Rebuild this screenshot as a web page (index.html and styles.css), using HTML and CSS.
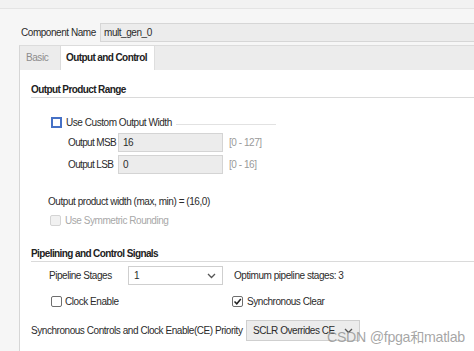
FILE: index.html
```html
<!DOCTYPE html>
<html>
<head>
<meta charset="utf-8">
<link rel="stylesheet" href="styles.css">
</head>
<body>
<div class="topstrip"></div>
<div class="header">
  <span class="name-label">Component Name</span>
  <div class="name-field">mult_gen_0</div>
</div>
<div class="tabs-wrap">
  <div class="tabbar">
    <div class="tab">Basic</div>
    <div class="tab active">Output and Control</div>
  </div>
  <div class="panel">
    <div class="section-title first">Output Product Range</div>
    <div class="row cb-row custom">
      <span class="cb blue"></span><span class="cb-label">Use Custom Output Width</span>
      <span class="group-line"></span>
    </div>
    <div class="row field-row msb">
      <span class="f-label">Output MSB</span>
      <div class="f-input">16</div>
      <span class="hint">[0 - 127]</span>
    </div>
    <div class="row field-row lsb">
      <span class="f-label">Output LSB</span>
      <div class="f-input">0</div>
      <span class="hint">[0 - 16]</span>
    </div>
    <div class="row plain width-info">Output product width (max, min) = (16,0)</div>
    <div class="row cb-row sym">
      <span class="cb disabled"></span><span class="cb-label dis">Use Symmetric Rounding</span>
    </div>
    <div class="section-title second">Pipelining and Control Signals</div>
    <div class="row pipe-row">
      <span class="p-label">Pipeline Stages</span>
      <div class="select white">
        <span>1</span>
        <svg class="chev" width="9" height="6" viewBox="0 0 9 6"><polyline points="1,1 4.5,4.5 8,1" fill="none" stroke="#555" stroke-width="1.3"/></svg>
      </div>
      <span class="optimum">Optimum pipeline stages: 3</span>
    </div>
    <div class="row ce-row">
      <div class="ce-left"><span class="cb gray"></span><span class="cb-label tight">Clock Enable</span></div>
      <div class="ce-right"><span class="cb gray checked"><svg width="9" height="9" viewBox="0 0 9 9"><polyline points="1.5,4.5 3.8,6.8 7.8,2" fill="none" stroke="#222" stroke-width="1.5"/></svg></span><span class="cb-label tight">Synchronous Clear</span></div>
    </div>
    <div class="row prio-row">
      <span class="prio-label">Synchronous Controls and Clock Enable(CE) Priority</span>
      <div class="select gray-sel">
        <span>SCLR Overrides CE</span>
        <svg class="chev" width="9" height="6" viewBox="0 0 9 6"><polyline points="1,1 4.5,4.5 8,1" fill="none" stroke="#555" stroke-width="1.3"/></svg>
      </div>
    </div>
    <div class="watermark">CSDN @fpga和matlab</div>
  </div>
</div>
</body>
</html>
```
FILE: styles.css
```css
html, body {
  margin: 0;
  padding: 0;
}
body {
  width: 474px;
  height: 351px;
  overflow: hidden;
  background: #f6f6f6;
  font-family: "Liberation Sans", Arial, sans-serif;
  font-size: 10px;
  letter-spacing: -0.45px;
  color: #2b2b2b;
  position: relative;
  white-space: nowrap;
}
.topstrip {
  height: 8px;
  background: #f2f2f2;
  border-bottom: 1px solid #e4e4e4;
}
.header {
  display: flex;
  align-items: center;
  padding-left: 21px;
  margin-top: 14px;
  height: 19px;
}
.name-label {
  width: 79px;
  flex: none;
}
.name-field {
  flex: 1;
  height: 19px;
  box-sizing: border-box;
  background: #ececec;
  border: 1px solid #d6d6d6;
  border-right: none;
  padding-left: 3px;
  line-height: 17px;
}
.tabs-wrap {
  margin-top: 3px;
  margin-left: 19px;
}
.tabbar {
  display: flex;
  height: 24px;
  background: #ececec;
  border-top: 1px solid #dcdcdc;
  border-left: 1px solid #d6d6d6;
}
.tab {
  height: 24px;
  line-height: 24px;
  box-sizing: border-box;
}
.tab:first-child {
  width: 41px;
  padding-left: 6px;
  color: #8c8c8c;
  border-right: 1px solid #dcdcdc;
}
.tab.active {
  width: 94px;
  background: #fff;
  padding-left: 5px;
  font-weight: bold;
  letter-spacing: -0.6px;
  color: #222;
  border-right: 1px solid #dedede;
}
.panel {
  position: relative;
  background: #fff;
  border-left: 1px solid #d6d6d6;
  height: 281px;
  overflow: hidden;
  padding-left: 11px;
}
.section-title {
  font-weight: bold;
  letter-spacing: -0.6px;
  line-height: 14px;
  height: 14px;
  border-bottom: 1px solid #dadada;
  color: #222;
}
.section-title.first {
  padding-top: 13px;
}
.section-title.second {
  margin-top: 20px;
}
.row {
  display: flex;
  align-items: center;
}
.row > * {
  flex: none;
}
.cb-row {
  height: 14px;
}
.custom {
  margin-top: 17px;
  padding-left: 20px;
}
.cb {
  display: inline-block;
  width: 11px;
  height: 11px;
  box-sizing: border-box;
  flex: none;
}
.cb.blue {
  border: 2px solid #4671c6;
  background: #fff;
}
.cb.disabled {
  border: 1px solid #d4d4d4;
  background: #f1f1f1;
  border-radius: 2px;
}
.cb.gray {
  border: 1px solid #6e6e6e;
  border-radius: 2px;
  background: #fff;
  display: flex;
  align-items: center;
  justify-content: center;
}
.cb-label {
  margin-left: 4px;
}
.cb-label.tight {
  margin-left: 3px;
}
.cb-label.dis {
  color: #a8a8a8;
}
.group-line {
  width: 100px;
  height: 1px;
  background: #e2e2e2;
  margin-left: 4px;
  margin-top: 4px;
}
.field-row {
  height: 19px;
  padding-left: 37px;
}
.msb {
  margin-top: 4px;
}
.lsb {
  margin-top: 3px;
}
.f-label {
  width: 50px;
  letter-spacing: -0.65px;
}
.f-input {
  width: 105px;
  height: 19px;
  box-sizing: border-box;
  background: #ececec;
  border: 1px solid #d4d4d4;
  padding-left: 4px;
  line-height: 17px;
}
.hint {
  margin-left: 6px;
  color: #9a9a9a;
}
.plain {
  height: 14px;
}
.width-info {
  margin-top: 20px;
  padding-left: 17px;
}
.sym {
  margin-top: 5px;
  padding-left: 19px;
}
.pipe-row {
  margin-top: 4px;
  height: 19px;
  padding-left: 18px;
}
.p-label {
  width: 79px;
}
.select {
  box-sizing: border-box;
  border: 1px solid #cfcfcf;
  display: flex;
  align-items: center;
  justify-content: space-between;
  padding: 0 6px 0 5px;
}
.select.white {
  width: 95px;
  height: 19px;
  background: #fff;
}
.optimum {
  margin-left: 11px;
}
.ce-row {
  margin-top: 9px;
  height: 14px;
  padding-left: 20px;
}
.ce-left {
  display: flex;
  align-items: center;
  width: 181px;
}
.ce-right {
  display: flex;
  align-items: center;
}
.ce-right .cb-label {
  margin-left: 4px;
}
.prio-row {
  margin-top: 12px;
  height: 21px;
}
.prio-label {
  width: 215px;
}
.select.gray-sel {
  width: 114px;
  height: 21px;
  background: #ececec;
  padding-left: 6px;
}
.watermark {
  position: absolute;
  left: 307px;
  top: 256px;
  font-size: 14.2px;
  letter-spacing: -0.3px;
  color: rgba(150, 150, 150, 0.85);
  font-family: "Liberation Sans", "Noto Sans CJK SC", sans-serif;
}
```
